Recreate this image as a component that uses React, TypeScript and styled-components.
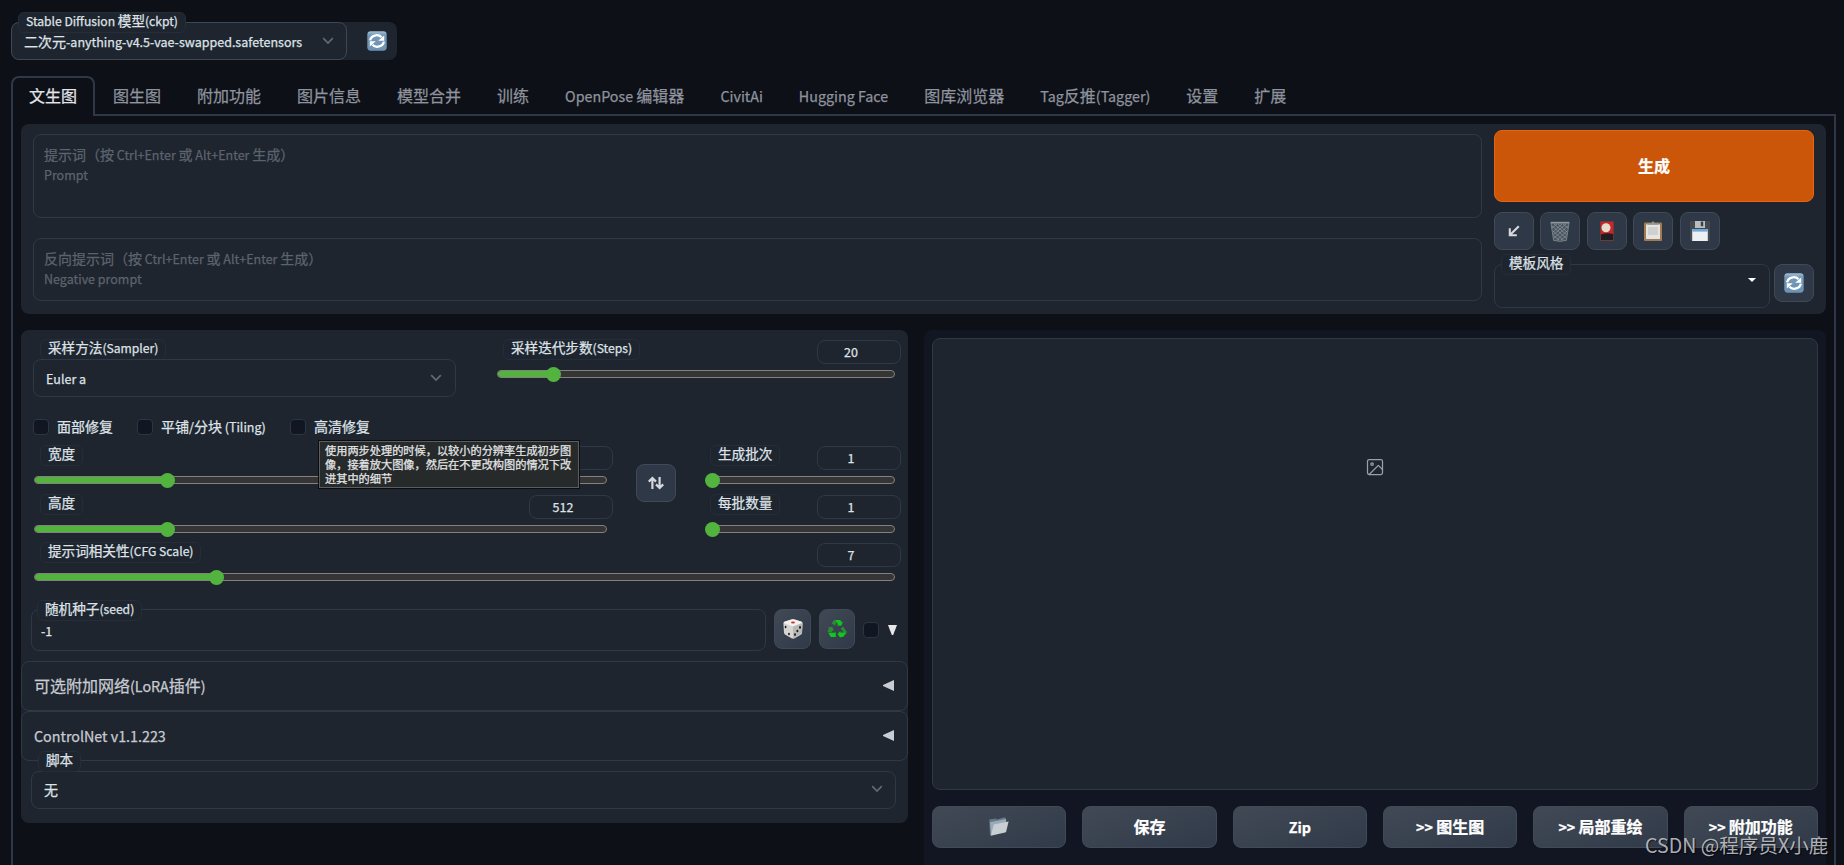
import React from 'react';
import styled, { createGlobalStyle, css } from 'styled-components';

const c = {
  page: '#0d1017',
  block: '#1e252f',
  line: '#2d3947',
  tabLine: '#2e3848',
  text: '#dfe2e7',
  green: '#52b43e',
};

const GlobalStyle = createGlobalStyle`
  * { box-sizing: border-box; }
  body {
    margin: 0;
    background: ${c.page};
    color: ${c.text};
    font-family: "Noto Sans CJK SC", sans-serif;
    font-size: 14px;
    -webkit-text-stroke: 0.25px currentColor;
    overflow: hidden;
  }
  svg { display: block; flex: none; }
`;

const Page = styled.div`
  height: 865px;
  padding: 22px 8px 0 11px;
  display: flex;
  flex-direction: column;
  overflow: hidden;
`;

const Latin = styled.span`
  font-size: 0.894em;
  line-height: 0;
`;

const Header = styled.header`
  display: flex;
  align-items: center;
  width: 386px;
  height: 38px;
  flex: none;
  background: ${c.block};
  border-radius: 8px;
`;

const Field = styled.div<{ $w?: string; $h: number; $strong?: boolean; $pad?: string }>`
  position: relative;
  display: flex;
  align-items: center;
  justify-content: space-between;
  flex: none;
  width: ${(p) => p.$w ?? 'auto'};
  height: ${(p) => p.$h}px;
  padding: ${(p) => p.$pad ?? '0 13px 1px 12px'};
  background: ${c.block};
  border: 1px solid ${(p) => (p.$strong ? '#3d4857' : c.line)};
  border-radius: 8px;
  line-height: 20px;
  white-space: nowrap;
`;

const LabelBox = styled.span`
  display: block;
  height: 21px;
  padding: 0 7px;
  background: ${c.block};
  border: 1px solid #252d38;
  border-radius: 6px;
  font-size: 13.6px;
  line-height: 15px;
  white-space: nowrap;
`;

const FloatLabel = styled(LabelBox)<{ $x: number; $y: number }>`
  position: absolute;
  left: ${(p) => p.$x}px;
  top: ${(p) => p.$y}px;
`;

const HeaderRefresh = styled.div`
  margin-left: 20px;
`;

const Tabs = styled.nav`
  display: flex;
  height: 40px;
  flex: none;
  margin-top: 16px;
  &::after {
    content: '';
    flex: 1;
    border-bottom: 2px solid ${c.tabLine};
  }
`;

const Tab = styled.div<{ $active?: boolean }>`
  height: 40px;
  padding: 0 18px;
  font-size: 16px;
  line-height: 38px;
  white-space: nowrap;
  color: #8e939d;
  border-bottom: 2px solid ${c.tabLine};
  ${(p) =>
    p.$active &&
    css`
      color: #e3e5e9;
      padding: 0 16px;
      line-height: 34px;
      border: 2px solid ${c.tabLine};
      border-bottom: 0;
      border-radius: 8px 8px 0 0;
    `}
`;

const TabPanel = styled.main`
  flex: 1;
  min-height: 0;
  padding: 8px 8px 0;
  border-left: 2px solid ${c.tabLine};
  border-right: 2px solid ${c.tabLine};
`;

const PromptBlock = styled.section`
  display: flex;
  justify-content: space-between;
  height: 190px;
  padding: 0 12px;
  background: ${c.block};
  border-radius: 8px;
`;

const PromptColumn = styled.div`
  display: flex;
  flex-direction: column;
  gap: 20px;
  width: 1449px;
  padding-top: 10px;
`;

const PromptBox = styled.div<{ $h: number }>`
  height: ${(p) => p.$h}px;
  padding: 9px 10px 0;
  border: 1px solid ${c.line};
  border-radius: 8px;
  color: #5d636e;
  line-height: 20px;
`;

const ActionColumn = styled.div`
  width: 320px;
  padding-top: 6px;
`;

const GenerateButton = styled.button`
  display: block;
  width: 100%;
  height: 72px;
  padding: 0 0 2px;
  background: #cb560a;
  border: 1px solid #ea640f;
  border-radius: 8px;
  color: #fff;
  font: bold 16px "Noto Sans CJK SC", sans-serif;
`;

const ToolRow = styled.div`
  display: flex;
  gap: 6.4px;
  margin-top: 10px;
`;

const ToolButton = styled.button<{ $w?: number; $h?: number; $gradient?: boolean }>`
  display: flex;
  align-items: center;
  justify-content: center;
  flex: none;
  width: ${(p) => p.$w ?? 40}px;
  height: ${(p) => p.$h ?? 38}px;
  padding: 0;
  background: ${(p) => (p.$gradient ? 'linear-gradient(135deg, #414955, #303948)' : '#2f3846')};
  border: 1px solid #3f4957;
  border-radius: 8px;
`;

const StyleRow = styled.div`
  display: flex;
  gap: 4px;
  margin-top: 14px;
`;

const Columns = styled.div`
  display: flex;
  gap: 16px;
  margin-top: 16px;
`;

const Settings = styled.section`
  width: 887px;
  height: 493px;
  padding-top: 9px;
  background: ${c.block};
  border-radius: 8px;
`;

const Row = styled.div<{ $top?: number; $left?: number; $gap?: number; $align?: string }>`
  display: flex;
  align-items: ${(p) => p.$align ?? 'flex-start'};
  gap: ${(p) => p.$gap ?? 0}px;
  margin-top: ${(p) => p.$top ?? 0}px;
  padding-left: ${(p) => p.$left ?? 13}px;
`;

const Stack = styled.div<{ $w: number; $left?: number }>`
  display: flex;
  flex-direction: column;
  gap: 10px;
  width: ${(p) => p.$w}px;
  margin-left: ${(p) => p.$left ?? 0}px;
`;

const SamplerGroup = styled.div`
  display: flex;
  flex-direction: column;
  align-items: flex-start;
  width: 423px;
  height: 58px;
  ${LabelBox} { margin: 0 0 -1px 7px; }
`;

const SliderBox = styled.div`
  height: 39px;
`;

const SliderHead = styled.div`
  display: flex;
  justify-content: space-between;
  height: 31px;
  padding-left: 6px;
`;

const NumberBox = styled.div`
  width: 84px;
  height: 24px;
  margin-top: 1px;
  padding-right: 16px;
  border: 1px solid ${c.line};
  border-radius: 8px;
  text-align: center;
  line-height: 21px;
`;

const Track = styled.div<{ $inset: number }>`
  position: relative;
  height: 8px;
  margin-left: ${(p) => p.$inset}px;
  margin-right: 6px;
  background: #353535;
  border: 1px solid #84807b;
  border-radius: 4px;
`;

const Fill = styled.div`
  height: 6px;
  background: ${c.green};
  border-radius: 3px;
`;

const Knob = styled.div`
  position: absolute;
  top: -4.5px;
  width: 15px;
  height: 15px;
  margin-left: -8.5px;
  border-radius: 50%;
  background: ${c.green};
`;

const Check = styled.span`
  width: 16px;
  height: 16px;
  flex: none;
  background: #111622;
  border: 1px solid #2c3543;
  border-radius: 4px;
`;

const CheckItem = styled.label<{ $w?: number }>`
  display: flex;
  align-items: center;
  gap: 8px;
  width: ${(p) => (p.$w ? `${p.$w}px` : 'auto')};
  height: 16px;
  white-space: nowrap;
`;

const CheckText = styled.span`
  line-height: 16px;
  padding-bottom: 2px;
`;

const TooltipAnchor = styled.div`
  position: relative;
`;

const Tooltip = styled.div`
  position: absolute;
  z-index: 5;
  left: 29px;
  top: 22px;
  width: 260px;
  height: 47px;
  padding: 1px 0 0 5px;
  background: #262a2b;
  border: 1px solid #5b5e60;
  box-shadow: 0 0 0 1px #0b0d10;
  color: #e4e5e6;
  font-size: 11.2px;
  line-height: 14px;
  white-space: pre;
`;

const Accordion = styled.div<{ $top?: number }>`
  display: flex;
  align-items: center;
  justify-content: space-between;
  height: 50px;
  margin-top: ${(p) => p.$top ?? 0}px;
  padding: 0 13px 1px 12px;
  border: 1px solid ${c.line};
  border-radius: 8px;
  color: #c8cbd1;
  font-size: 16px;
  line-height: 22px;
`;

const AccordionTitle = styled.span`
  padding-bottom: 1px;
`;

const Output = styled.section`
  display: flex;
  flex-direction: column;
  width: 902px;
  height: 535px;
  padding: 8px;
  background: #111622;
  border-radius: 8px 8px 0 0;
`;

const Gallery = styled.div`
  display: flex;
  justify-content: center;
  height: 452px;
  padding-top: 118px;
  background: ${c.block};
  border: 1px solid #2f3843;
  border-radius: 8px;
`;

const OutputButtons = styled.div`
  display: flex;
  gap: 16px;
  margin-top: 16px;
`;

const OutputButton = styled.button`
  flex: 1 1 0;
  display: flex;
  align-items: center;
  justify-content: center;
  height: 42px;
  padding: 0 0 2px;
  background: linear-gradient(160deg, #414955, #313a49);
  border: 1px solid #414a57;
  border-radius: 8px;
  color: #fff;
  font: bold 16px "Noto Sans CJK SC", sans-serif;
  white-space: nowrap;
`;

const Watermark = styled.div`
  position: absolute;
  left: 1645px;
  top: 830px;
  color: rgba(208, 210, 214, 0.82);
  font-size: 19.6px;
  line-height: 29px;
  white-space: nowrap;
  text-shadow: 1px 1px 1px rgba(0, 0, 0, 0.6);
  -webkit-text-stroke: 0;
`;

const Text = ({ children }: { children: string }) => (
  <span>
    {children.split(/([\x20-\x7e]+)/).map((part, i) =>
      i % 2 ? <Latin key={i}>{part}</Latin> : part,
    )}
  </span>
);

const Label = ({ children }: { children: string }) => (
  <LabelBox><Text>{children}</Text></LabelBox>
);

const Chevron = () => (
  <svg width="12" height="8" viewBox="0 0 12 8" fill="none" stroke="#626976" strokeWidth="1.7">
    <path d="M1.2 1.2 6 6l4.8-4.8" />
  </svg>
);

const RefreshIcon = () => (
  <svg width="20" height="20" viewBox="0 0 20 20">
    <defs>
      <linearGradient id="refreshFill" x1="0" y1="0" x2="0" y2="1">
        <stop offset="0" stopColor="#a3c0d8" />
        <stop offset="0.2" stopColor="#7397b8" />
        <stop offset="1" stopColor="#6c93b5" />
      </linearGradient>
    </defs>
    <rect x="0.3" y="0.3" width="19.4" height="19.4" rx="3.4" fill="url(#refreshFill)" />
    <path d="M3.2 9.4A6.6 6 0 0 1 14.6 6.2M16.8 10.6A6.6 6 0 0 1 5.4 13.8" fill="none" stroke="#fff" strokeWidth="2.3" />
    <path d="M17.2 4.4v5.4h-6zM2.8 15.6v-5.4h6z" fill="#fff" />
  </svg>
);

const ArrowIcon = () => (
  <svg width="12" height="12" viewBox="0 0 12 12" fill="none" stroke="#d5d9dc" strokeWidth="2.1">
    <path d="M10.8 1.2 2.2 9.8M1.8 3.2v7h7" />
  </svg>
);

const TrashIcon = () => (
  <svg width="20" height="21" viewBox="0 0 20 21">
    <path d="M1 2h18l-2.6 17.4q-6.4 1.8-12.8 0z" fill="#4b555f" />
    <path
      d="M2 5l14 12M4 3l13 11M8 3l9 8M13 3l5 4M3 10l10 9M4 15l5 4M18 5 4 17M16 3 3 14M12 3 3 11M7 3 2 7M17 10 7 19M16 15l-5 4"
      stroke="#8a949c"
      strokeWidth="0.7"
    />
    <path d="M1 2h18l-2.6 17.4q-6.4 1.8-12.8 0z" fill="none" stroke="#78828b" strokeWidth="1" />
    <path d="M0.6 1.5h18.8" stroke="#8f989f" strokeWidth="1.4" />
  </svg>
);

const CardIcon = () => (
  <svg width="14" height="20" viewBox="0 0 14 20">
    <rect width="14" height="20" rx="0.8" fill="#6d3a3b" />
    <rect x="0.9" y="0.9" width="12.2" height="13" fill="#c9252d" />
    <path d="M.9 13.4q6-2 12.2-.4v6.1H.9z" fill="#1e1d1f" />
    <circle cx="6" cy="6.8" r="4.5" fill="#e5dccb" />
  </svg>
);

const ClipboardIcon = () => (
  <svg width="18" height="20" viewBox="0 0 18 20">
    <rect y="1.4" width="18" height="18.6" rx="1" fill="#a27c50" />
    <rect x="2" y="3.4" width="14" height="14.6" fill="#e4e4e3" />
    <rect x="4" y="6" width="10" height="8" fill="#cfd0d0" />
    <path d="M3.6 3.8V2.2h3.6L9 0l1.8 2.2h3.6v1.6z" fill="#8f989f" />
  </svg>
);

const FloppyIcon = () => (
  <svg width="20" height="20" viewBox="0 0 20 20">
    <path d="M0 0h20v20H1.4L0 18.6z" fill="#45494e" />
    <rect x="5" y="0" width="10" height="7" fill="#b9bdc0" />
    <rect x="10.8" y="0.6" width="2.4" height="4.6" fill="#3b4045" />
    <rect x="2.2" y="8" width="15.6" height="12" fill="#eef1f3" />
    <rect x="2.2" y="8" width="15.6" height="2.6" fill="#6fa8d8" />
  </svg>
);

const SwapIcon = () => (
  <svg width="16" height="14" viewBox="0 0 16 14" fill="none" stroke="#d5d9dd" strokeWidth="2.2">
    <path d="M4.4 13V2M.8 5.6 4.4 2 8 5.6M11.6 1v11M8 8.4l3.6 3.6 3.6-3.6" />
  </svg>
);

const DiceIcon = () => (
  <svg width="20" height="20" viewBox="0 0 20 20">
    <path d="M0.4 4.4Q.4 3.2 2 2.6L8.4.4Q10 0 11.6.4L18 2.6q1.6.6 1.6 1.8l-.6 9.4q-.2 1.4-1.4 2L11 19.4q-1 .4-2 0l-6.6-3.6q-1.2-.6-1.4-2z" fill="#d5d4d2" />
    <path d="M.6 4 10 7.4 19.4 4Q19 3 18 2.6L11.6.4Q10 0 8.4.4L2 2.6Q.8 3 .6 4z" fill="#f2f1ef" />
    <path d="M10 7.4 19.5 4l-.5 9.8q-.2 1.4-1.4 2L11 19.4l-1 .2z" fill="#b9b8b6" />
    <ellipse cx="10" cy="3.4" rx="2" ry="1" fill="#d8302a" />
    <g fill="#1c1c1c">
      <ellipse cx="2.6" cy="8" rx=".9" ry="1.3" />
      <ellipse cx="6" cy="15" rx=".9" ry="1.3" />
      <ellipse cx="17" cy="8.4" rx="1" ry="1.3" />
      <ellipse cx="14.4" cy="12" rx="1" ry="1.3" />
      <ellipse cx="12" cy="15.6" rx="1" ry="1.3" />
    </g>
  </svg>
);

const RecycleIcon = () => (
  <svg width="20" height="18" viewBox="0 0 20 18">
    <path d="M4.6 3.6 6.4.6Q7 0 8 0h3L8 5.6z" fill="#2c8a39" />
    <path d="M8.4 0h4.2q.8 0 1.2.7l.9 1.6 1.3-.7-1.8 4.2-4.6-.4 1.4-.8z" fill="#10c81d" />
    <path d="M16 6.6l3.4 4.6q.6.8.2 1.6L18.4 15l-4.8-6.6z" fill="#2c8a39" />
    <path d="M18.6 13l-1.8 3.2q-.4.8-1.4.8h-2V18l-2.8-3.8 2.8-3.4v1.6h4.2z" fill="#10c81d" />
    <path d="M8.8 12.4V17H4.6q-1 0-1.4-.8L1.4 13z" fill="#10c81d" />
    <path d="M.4 11.2 2 8.4l-1.2-.8 4.4-.8 2 4.2-1.4-.8-1.2 2.2H1.2z" fill="#2c8a39" />
  </svg>
);

const FolderIcon = () => (
  <svg width="20" height="19" viewBox="0 0 20 19">
    <path d="M.3 2.6 7 1.6l1 1L15.6.3l1.6 1.6v4L1.8 18.6.9 18z" fill="#66788a" />
    <path d="M1 5.2 17 2v4L2 17z" fill="#9aabb8" />
    <path d="M4.8 7.6 19.6 4.6 17.2 14.4q-.3.9-1.2 1.1L1.8 18.8z" fill="#c9ced3" />
  </svg>
);

const ImageIcon = () => (
  <svg width="20" height="20" viewBox="0 0 24 24" fill="none" stroke="#9a9fa8" strokeWidth="1.5" strokeLinecap="round" strokeLinejoin="round">
    <rect x="3" y="3" width="18" height="18" rx="2" />
    <circle cx="8.5" cy="8.5" r="1.5" />
    <path d="M21 15l-5-5L5 21" />
  </svg>
);

const Triangle = ({ d, w, h, fill = '#e6e7ea' }: { d: string; w: number; h: number; fill?: string }) => (
  <svg width={w} height={h} viewBox={`0 0 ${w} ${h}`}>
    <path d={d} fill={fill} />
  </svg>
);

const Slider = ({ label, value, at, inset = 0 }: { label: string; value: string; at: number; inset?: number }) => (
  <SliderBox>
    <SliderHead>
      <Label>{label}</Label>
      <NumberBox><Text>{value}</Text></NumberBox>
    </SliderHead>
    <Track $inset={inset}>
      <Fill style={{ width: at }} />
      <Knob style={{ left: at }} />
    </Track>
  </SliderBox>
);

const tabs = [
  '文生图', '图生图', '附加功能', '图片信息', '模型合并', '训练', 'OpenPose 编辑器',
  'CivitAi', 'Hugging Face', '图库浏览器', 'Tag反推(Tagger)', '设置', '扩展',
];

const tools = [ArrowIcon, TrashIcon, CardIcon, ClipboardIcon, FloppyIcon];

const sendButtons = ['保存', 'Zip', '>> 图生图', '>> 局部重绘', '>> 附加功能'];

export default function App() {
  return (
    <Page>
      <GlobalStyle />
      <Header>
        <Field $w="336px" $h={38} $strong $pad="0 12px 1px 12px">
          <FloatLabel $x={6} $y={-11}><Text>Stable Diffusion 模型(ckpt)</Text></FloatLabel>
          <Text>二次元-anything-v4.5-vae-swapped.safetensors</Text>
          <Chevron />
        </Field>
        <HeaderRefresh>
          <RefreshIcon />
        </HeaderRefresh>
      </Header>

      <Tabs>
        {tabs.map((t, i) => (
          <Tab key={t} $active={i === 0}><Text>{t}</Text></Tab>
        ))}
      </Tabs>

      <TabPanel>
        <PromptBlock>
          <PromptColumn>
            <PromptBox $h={84}>
              <Text>提示词（按 Ctrl+Enter 或 Alt+Enter 生成）</Text>
              <br />
              <Text>Prompt</Text>
            </PromptBox>
            <PromptBox $h={63}>
              <Text>反向提示词（按 Ctrl+Enter 或 Alt+Enter 生成）</Text>
              <br />
              <Text>Negative prompt</Text>
            </PromptBox>
          </PromptColumn>
          <ActionColumn>
            <GenerateButton>生成</GenerateButton>
            <ToolRow>
              {tools.map((Icon, i) => (
                <ToolButton key={i}><Icon /></ToolButton>
              ))}
            </ToolRow>
            <StyleRow>
              <Field $w="276px" $h={44} $pad="0 13px 13px">
                <FloatLabel $x={6} $y={-11}>模板风格</FloatLabel>
                <span />
                <Triangle d="M0 0h8L4 4z" w={8} h={4} fill="#fff" />
              </Field>
              <ToolButton><RefreshIcon /></ToolButton>
            </StyleRow>
          </ActionColumn>
        </PromptBlock>

        <Columns>
          <Settings>
            <Row $left={12}>
              <SamplerGroup>
                <Label>采样方法(Sampler)</Label>
                <Field $w="423px" $h={38}>
                  <Text>Euler a</Text>
                  <Chevron />
                </Field>
              </SamplerGroup>
              <Stack $w={404} $left={41}>
                <Slider label="采样迭代步数(Steps)" value="20" at={56} />
              </Stack>
            </Row>

            <Row $top={22} $left={12}>
              <CheckItem $w={104}><Check /><CheckText>面部修复</CheckText></CheckItem>
              <CheckItem $w={153}><Check /><CheckText><Text>平铺/分块 (Tiling)</Text></CheckText></CheckItem>
              <TooltipAnchor>
                <CheckItem><Check /><CheckText>高清修复</CheckText></CheckItem>
                <Tooltip>{'使用两步处理的时候，以较小的分辨率生成初步图\n像，接着放大图像，然后在不更改构图的情况下改\n进其中的细节'}</Tooltip>
              </TooltipAnchor>
            </Row>

            <Row $top={10}>
              <Stack $w={579}>
                <Slider label="宽度" value="" at={133} />
                <Slider label="高度" value="512" at={133} />
              </Stack>
              <Row $top={19} $left={23}>
                <ToolButton><SwapIcon /></ToolButton>
              </Row>
              <Stack $w={197} $left={28}>
                <Slider label="生成批次" value="1" at={6} inset={2} />
                <Slider label="每批数量" value="1" at={6} inset={2} />
              </Stack>
            </Row>

            <Row $top={9}>
              <Stack $w={867}>
                <Slider label="提示词相关性(CFG Scale)" value="7" at={182} />
              </Stack>
            </Row>

            <Row $top={28} $left={10} $gap={8}>
              <Field $w="735px" $h={42} $pad="0 9px 1px">
                <FloatLabel $x={5} $y={-10}><Text>随机种子(seed)</Text></FloatLabel>
                <Text>-1</Text>
              </Field>
              <ToolButton $w={37} $h={40} $gradient><DiceIcon /></ToolButton>
              <ToolButton $w={36} $h={40} $gradient><RecycleIcon /></ToolButton>
              <Row $top={13} $left={0} $gap={9} $align="center">
                <Check />
                <Triangle d="M0 0h9L5.2 10H3.8z" w={9} h={10} />
              </Row>
            </Row>

            <Accordion $top={10}>
              <AccordionTitle><Text>可选附加网络(LoRA插件)</Text></AccordionTitle>
              <Triangle d="M11 0v11L0 6V5z" w={11} h={11} fill="#c9cdd3" />
            </Accordion>
            <Accordion>
              <AccordionTitle><Text>ControlNet v1.1.223</Text></AccordionTitle>
              <Triangle d="M11 0v11L0 6V5z" w={11} h={11} fill="#c9cdd3" />
            </Accordion>

            <Row $top={10} $left={10}>
              <Field $w="865px" $h={38} $pad="0 12px 2px 12px">
                <FloatLabel $x={6} $y={-21}>脚本</FloatLabel>
                <Text>无</Text>
                <Chevron />
              </Field>
            </Row>
          </Settings>

          <Output>
            <Gallery><ImageIcon /></Gallery>
            <OutputButtons>
              <OutputButton><FolderIcon /></OutputButton>
              {sendButtons.map((t) => (
                <OutputButton key={t}><Text>{t}</Text></OutputButton>
              ))}
            </OutputButtons>
          </Output>
        </Columns>
      </TabPanel>
      <Watermark>CSDN @程序员X小鹿</Watermark>
    </Page>
  );
}
